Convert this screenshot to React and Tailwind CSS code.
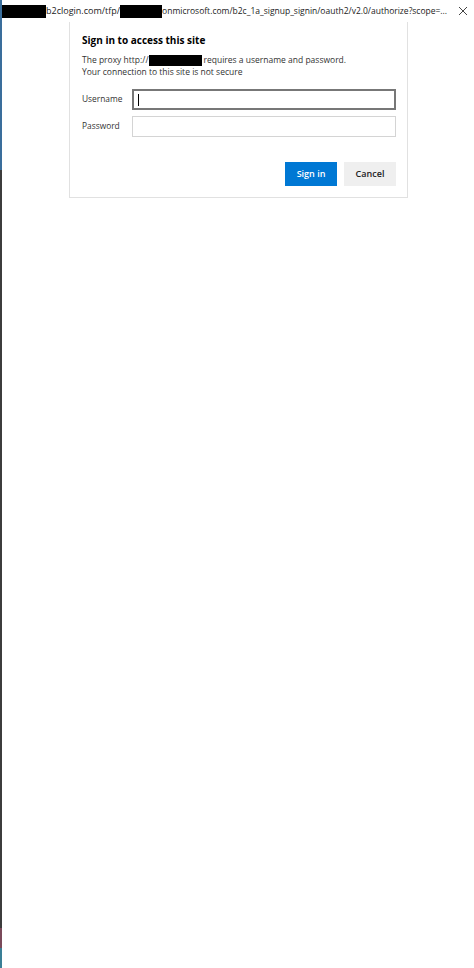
import React from 'react';

const font = { fontFamily: '"Open Sans", "Noto Sans", Arial, sans-serif' };

function Redacted({ w }) {
  return <span className={`inline-block h-[13px] shrink-0 bg-black align-middle ${w}`} />;
}

export default function App() {
  return (
    <div className="flex h-[968px] w-[474px] overflow-hidden bg-white text-[#1f1f1f]" style={font}>
      {/* window edge strip */}
      <div className="flex w-[2px] shrink-0 flex-col">
        <div className="h-[170px] bg-[#3a6e9c]" />
        <div className="flex-1 bg-[#3c3c3c]" />
        <div className="h-[20px] bg-[#7a4a5a]" />
        <div className="h-[20px] bg-[#3a7f96]" />
      </div>

      <div className="flex min-w-0 flex-1 flex-col">
        {/* address line */}
        <div className="flex h-[22px] items-center text-[9px] leading-[14px] whitespace-nowrap text-[#222]">
          <Redacted w="w-[44px]" />
          <span>b2clogin.com/tfp/</span>
          <Redacted w="w-[42px]" />
          <span className="min-w-0 flex-1 text-[8.5px]">onmicrosoft.com/b2c_1a_signup_signin/oauth2/v2.0/authorize?scope=...</span>
          <svg className="mr-[6px] ml-[8px] shrink-0" width="10" height="10" viewBox="0 0 10 10">
            <path d="M1 1 L9 9 M9 1 L1 9" stroke="#444" strokeWidth="1" />
          </svg>
        </div>

        {/* auth dialog */}
        <div className="ml-[67px] w-[339px] border-x border-b border-[#e1e1e1] pt-[11px] pr-[11px] pb-[11px] pl-[12px]">
          <div className="text-[10px] font-bold leading-[14px] text-black">Sign in to access this site</div>
          <div className="mt-[7px] text-[8.5px] leading-[12px] text-[#333]">
            <div className="flex items-center">
              <span>The proxy http://</span>
              <span className="inline-block h-[11px] w-[53px] bg-black" />
              <span className="ml-[2px]">requires a username and password.</span>
            </div>
            <div>Your connection to this site is not secure</div>
          </div>

          <div className="mt-[11px] flex flex-col gap-[6px]">
            <div className="flex items-center">
              <label className="w-[50px] text-[8.4px] text-[#333]">Username</label>
              <div className="flex h-[21px] flex-1 items-center border-2 border-[#777] px-[4px]">
                <span className="h-[12px] w-px bg-black" />
              </div>
            </div>
            <div className="flex items-center">
              <label className="w-[50px] text-[8.4px] text-[#333]">Password</label>
              <div className="h-[21px] flex-1 border border-[#d4d4d4]" />
            </div>
          </div>

          <div className="mt-[25px] flex justify-end gap-[7px]">
            <button className="h-[24px] w-[52px] bg-[#0078d4] text-[9px] font-semibold text-white">Sign in</button>
            <button className="h-[24px] w-[52px] bg-[#efefef] text-[9px] font-semibold text-[#222]">Cancel</button>
          </div>
        </div>
      </div>
    </div>
  );
}
